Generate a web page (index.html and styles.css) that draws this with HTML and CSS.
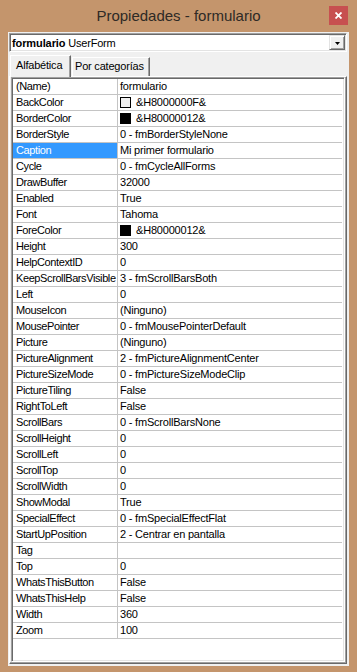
FILE: index.html
```html
<!DOCTYPE html>
<html lang="es">
<head>
<meta charset="utf-8">
<title>Propiedades - formulario</title>
<link rel="stylesheet" href="styles.css">
</head>
<body>
<div class="window">
  <div class="titlebar">
    <span class="title">Propiedades - formulario</span>
    <div class="close"><svg width="7" height="7" viewBox="0 0 7 7"><path d="M0.5 0.5 L6.5 6.5 M6.5 0.5 L0.5 6.5" stroke="#fff" stroke-width="1.8" fill="none"/></svg></div>
  </div>
  <div class="client">
    <div class="combo">
      <span class="combo-text"><b>formulario</b> UserForm</span>
      <span class="combo-btn"><svg width="7" height="4" viewBox="0 0 7 4"><polygon points="0,0 7,0 3.5,4" fill="#000"/></svg></span>
    </div>
    <div class="tabs">
      <div class="tab active">Alfabética</div>
      <div class="tab">Por categorías</div>
    </div>
    <div class="panel">
      <div class="grid">
        <div class="row"><div class="name">(Name)</div><div class="value">formulario</div></div>
        <div class="row"><div class="name">BackColor</div><div class="value"><span class="swatch swatch-light"></span>&amp;H8000000F&amp;</div></div>
        <div class="row"><div class="name">BorderColor</div><div class="value"><span class="swatch swatch-dark"></span>&amp;H80000012&amp;</div></div>
        <div class="row"><div class="name">BorderStyle</div><div class="value">0 - fmBorderStyleNone</div></div>
        <div class="row selected"><div class="name">Caption</div><div class="value">Mi primer formulario</div></div>
        <div class="row"><div class="name">Cycle</div><div class="value">0 - fmCycleAllForms</div></div>
        <div class="row"><div class="name">DrawBuffer</div><div class="value">32000</div></div>
        <div class="row"><div class="name">Enabled</div><div class="value">True</div></div>
        <div class="row"><div class="name">Font</div><div class="value">Tahoma</div></div>
        <div class="row"><div class="name">ForeColor</div><div class="value"><span class="swatch swatch-dark"></span>&amp;H80000012&amp;</div></div>
        <div class="row"><div class="name">Height</div><div class="value">300</div></div>
        <div class="row"><div class="name">HelpContextID</div><div class="value">0</div></div>
        <div class="row"><div class="name">KeepScrollBarsVisible</div><div class="value">3 - fmScrollBarsBoth</div></div>
        <div class="row"><div class="name">Left</div><div class="value">0</div></div>
        <div class="row"><div class="name">MouseIcon</div><div class="value">(Ninguno)</div></div>
        <div class="row"><div class="name">MousePointer</div><div class="value">0 - fmMousePointerDefault</div></div>
        <div class="row"><div class="name">Picture</div><div class="value">(Ninguno)</div></div>
        <div class="row"><div class="name">PictureAlignment</div><div class="value">2 - fmPictureAlignmentCenter</div></div>
        <div class="row"><div class="name">PictureSizeMode</div><div class="value">0 - fmPictureSizeModeClip</div></div>
        <div class="row"><div class="name">PictureTiling</div><div class="value">False</div></div>
        <div class="row"><div class="name">RightToLeft</div><div class="value">False</div></div>
        <div class="row"><div class="name">ScrollBars</div><div class="value">0 - fmScrollBarsNone</div></div>
        <div class="row"><div class="name">ScrollHeight</div><div class="value">0</div></div>
        <div class="row"><div class="name">ScrollLeft</div><div class="value">0</div></div>
        <div class="row"><div class="name">ScrollTop</div><div class="value">0</div></div>
        <div class="row"><div class="name">ScrollWidth</div><div class="value">0</div></div>
        <div class="row"><div class="name">ShowModal</div><div class="value">True</div></div>
        <div class="row"><div class="name">SpecialEffect</div><div class="value">0 - fmSpecialEffectFlat</div></div>
        <div class="row"><div class="name">StartUpPosition</div><div class="value">2 - Centrar en pantalla</div></div>
        <div class="row"><div class="name">Tag</div><div class="value"></div></div>
        <div class="row"><div class="name">Top</div><div class="value">0</div></div>
        <div class="row"><div class="name">WhatsThisButton</div><div class="value">False</div></div>
        <div class="row"><div class="name">WhatsThisHelp</div><div class="value">False</div></div>
        <div class="row"><div class="name">Width</div><div class="value">360</div></div>
        <div class="row"><div class="name">Zoom</div><div class="value">100</div></div>
      </div>
    </div>
  </div>
</div>
</body>
</html>
```
FILE: styles.css
```css
html, body {
  margin: 0;
  padding: 0;
}
body {
  width: 357px;
  height: 672px;
  overflow: hidden;
  background: #c4956c;
  font-family: "Liberation Sans", Arial, sans-serif;
}
.window {
  height: 672px;
  box-sizing: border-box;
  padding: 0 8px 6px 8px;
  display: flex;
  flex-direction: column;
}
.titlebar {
  height: 32px;
  display: grid;
  grid-template-columns: 1fr auto 1fr;
  align-items: center;
}
.title {
  grid-column: 2;
  font-size: 15px;
  color: #2e2a26;
  white-space: nowrap;
  padding-bottom: 1px;
}
.close {
  grid-column: 3;
  justify-self: end;
  align-self: start;
  margin-top: 6px;
  margin-right: 1px;
  width: 19px;
  height: 19px;
  background: #c75050;
  display: flex;
  align-items: center;
  justify-content: center;
}
.close svg { display: block; }

.client {
  flex: 1;
  background: #f0f0f0;
  display: flex;
  flex-direction: column;
  padding: 1px 2px 2px 1px;
  min-height: 0;
}
.combo {
  height: 19px;
  box-sizing: border-box;
  background: #fff;
  border-top: 1px solid #a0a0a0;
  border-left: 1px solid #a0a0a0;
  border-right: 1px solid #fff;
  border-bottom: 1px solid #fff;
  box-shadow: inset 1px 1px 0 #696969, inset -1px -1px 0 #e3e3e3;
  display: flex;
  align-items: center;
  padding: 1px 1px 1px 2px;
}
.combo-text {
  flex: 1;
  font-size: 11px;
  letter-spacing: -0.2px;
  color: #000;
  white-space: nowrap;
}
.combo-text b {
  font-weight: bold;
  letter-spacing: -0.1px;
}
.combo-btn {
  width: 16px;
  height: 15px;
  box-sizing: border-box;
  background: #f0f0f0;
  border-top: 1px solid #e3e3e3;
  border-left: 1px solid #e3e3e3;
  border-right: 1px solid #696969;
  border-bottom: 1px solid #696969;
  box-shadow: inset 1px 1px 0 #fff, inset -1px -1px 0 #a0a0a0;
  display: flex;
  align-items: center;
  justify-content: center;
}
.combo-btn svg {
  display: block;
  width: 5px;
  height: 3px;
  margin-top: 1px;
}

.tabs {
  margin-top: 3px;
  height: 21px;
  display: flex;
  align-items: flex-end;
  padding-left: 1px;
}
.tab {
  font-size: 11px;
  letter-spacing: -0.2px;
  color: #000;
  box-sizing: border-box;
  height: 19px;
  line-height: 17px;
  border-top: 1px solid #fff;
  border-left: 1px solid #fff;
  border-right: 1px solid #696969;
  box-shadow: inset -1px 0 0 #a0a0a0;
  padding-left: 2px;
  white-space: nowrap;
}
.tab.active {
  height: 22px;
  margin-bottom: -1px;
  width: 61px;
  padding-left: 5px;
  line-height: 19px;
  background: #f0f0f0;
  position: relative;
  z-index: 1;
}
.tab:not(.active) {
  width: 78px;
  margin-left: 1px;
}

.panel {
  flex: 1;
  min-height: 0;
  display: flex;
  border-top: 1px solid #fff;
  border-left: 1px solid #fff;
  border-right: 1px solid #696969;
  border-bottom: 1px solid #696969;
  box-shadow: inset -1px -1px 0 #a0a0a0;
  padding: 0 1px 1px 1px;
}
.grid {
  flex: 1;
  background: #fff;
  border-top: 1px solid #a0a0a0;
  border-left: 1px solid #a0a0a0;
  border-right: 1px solid #fff;
  border-bottom: 1px solid #fff;
  box-shadow: inset 1px 1px 0 #696969, inset -1px -1px 0 #e3e3e3;
  padding: 1px 2px 0 1px;
  overflow: hidden;
}
.row {
  display: grid;
  grid-template-columns: 105px 1fr;
  height: 16px;
  font-size: 11px;
  color: #000;
}
.name, .value {
  border-bottom: 1px solid #c4c4c4;
  line-height: 15px;
  white-space: nowrap;
  overflow: hidden;
  display: flex;
  align-items: center;
}
.name {
  border-right: 1px solid #c4c4c4;
  padding-left: 3px;
  letter-spacing: -0.4px;
}
.value {
  padding-left: 2px;
  letter-spacing: -0.2px;
}
.row.selected .name {
  background: #3399ff;
  color: #fff;
}
.swatch {
  width: 11px;
  height: 11px;
  box-sizing: border-box;
  border: 1px solid #000;
  margin-right: 5px;
  flex: none;
}
.swatch-light { background: #f0f0f0; }
.swatch-dark { background: #000; }
```
